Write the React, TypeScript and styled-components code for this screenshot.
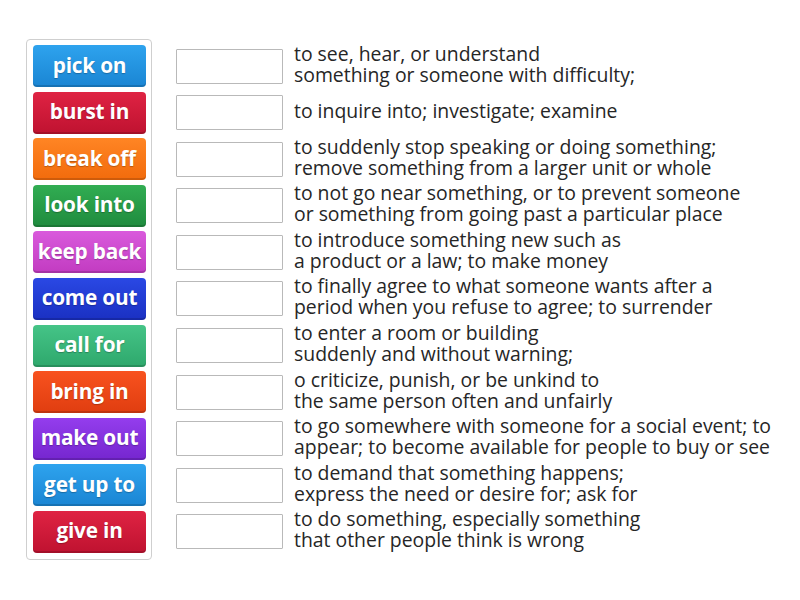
import React from 'react';
import styled, { createGlobalStyle } from 'styled-components';

const GlobalStyle = createGlobalStyle`
    html, body {
        margin: 0;
        padding: 0;
        background: #fff;
        font-family: "Open Sans", "Liberation Sans", sans-serif;
    }
`;

const Page = styled.main`
    display: flex;
    align-items: flex-start;
    gap: 24px;
    padding: 39px 0 0 26px;
    width: 800px;
    height: 600px;
    box-sizing: border-box;
`;

const TilePanel = styled.section`
    display: flex;
    flex-direction: column;
    gap: 4.6px;
    width: 126px;
    padding: 5px 5px 6px 6px;
    box-sizing: border-box;

    border: 1px solid #cfcfcf;
    border-radius: 4px;
`;

const Tile = styled.div<{ $top: string; $bottom: string }>`
    display: flex;
    align-items: center;
    justify-content: center;
    height: 42px;
    padding-bottom: 3px;
    box-sizing: border-box;

    background: linear-gradient(to bottom, ${p => p.$top}, ${p => p.$bottom});
    border-radius: 4px;
    box-shadow: inset 0 -2px 0 rgba(0, 0, 0, 0.15);

    font-weight: 700;
    font-size: 20.8px;
    color: #fff;
    white-space: nowrap;
    letter-spacing: -0.2px;
    text-shadow: 0 1px 1px rgba(0, 0, 0, 0.25);
`;

const RowList = styled.section`
    display: flex;
    flex-direction: column;
    gap: 4.6px;
    padding-top: 6px;
`;

const Row = styled.div`
    display: flex;
    align-items: center;
    gap: 11px;
    height: 42px;
`;

const DropBox = styled.div`
    flex: none;
    width: 107px;
    height: 35px;
    box-sizing: border-box;

    background: #fff;
    border: 1px solid #b9b9b9;
    border-radius: 1px;
`;

const Definition = styled.p`
    margin: 0;
    padding-bottom: 5px;
    font-size: 19.4px;
    line-height: 21px;
    color: #262626;
    white-space: nowrap;
`;

const tiles = [
    { word: 'pick on', top: '#2ea3ee', bottom: '#1a85d3' },
    { word: 'burst in', top: '#df2343', bottom: '#bf1230' },
    { word: 'break off', top: '#ff8524', bottom: '#f26b0c' },
    { word: 'look into', top: '#31ad52', bottom: '#1f8b3e' },
    { word: 'keep back', top: '#d95adc', bottom: '#c23bc1' },
    { word: 'come out', top: '#2a48e4', bottom: '#1a30c2' },
    { word: 'call for', top: '#45c487', bottom: '#2ea86c' },
    { word: 'bring in', top: '#f8521f', bottom: '#e03d10' },
    { word: 'make out', top: '#943ded', bottom: '#7526cf' },
    { word: 'get up to', top: '#2ea3ee', bottom: '#1a85d3' },
    { word: 'give in', top: '#df2343', bottom: '#bf1230' },
];

const definitions = [
    ['to see, hear, or understand', 'something or someone with difficulty;'],
    ['to inquire into; investigate; examine'],
    ['to suddenly stop speaking or doing something;', 'remove something from a larger unit or whole'],
    ['to not go near something, or to prevent someone', 'or something from going past a particular place'],
    ['to introduce something new such as', 'a product or a law; to make money'],
    ['to finally agree to what someone wants after a', 'period when you refuse to agree; to surrender'],
    ['to enter a room or building', 'suddenly and without warning;'],
    ['o criticize, punish, or be unkind to', 'the same person often and unfairly'],
    ['to go somewhere with someone for a social event; to', 'appear; to become available for people to buy or see'],
    ['to demand that something happens;', 'express the need or desire for; ask for'],
    ['to do something, especially something', 'that other people think is wrong'],
];

function App() {
    return (
    <>
        <GlobalStyle />
        <Page>
            <TilePanel>
                {tiles.map(t => (
                    <Tile key={t.word} $top={t.top} $bottom={t.bottom}>{t.word}</Tile>
                ))}
            </TilePanel>
            <RowList>
                {definitions.map((lines, i) => (
                    <Row key={i}>
                        <DropBox />
                        <Definition>
                            {lines.map((l, j) => (
                                <React.Fragment key={j}>{j > 0 && <br />}{l}</React.Fragment>
                            ))}
                        </Definition>
                    </Row>
                ))}
            </RowList>
        </Page>
    </>);
}
export default App;
